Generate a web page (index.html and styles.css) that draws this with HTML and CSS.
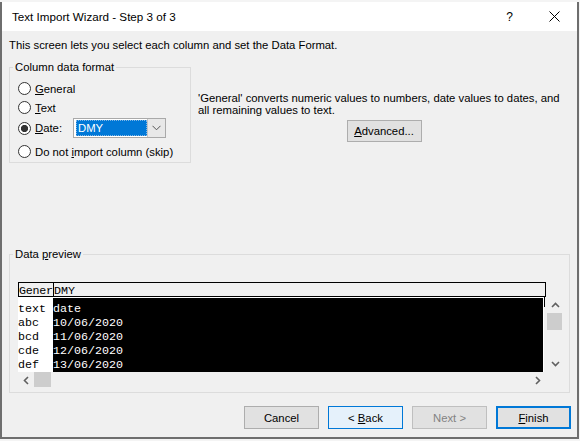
FILE: index.html
```html
<!DOCTYPE html>
<html>
<head>
<meta charset="utf-8">
<title>Text Import Wizard</title>
<link rel="stylesheet" href="styles.css">
</head>
<body>
<div class="window">
  <div class="titlebar">
    <span class="title">Text Import Wizard - Step 3 of 3</span>
    <span class="tb-btn help">?</span>
    <span class="tb-btn close"><svg width="11" height="11" viewBox="0 0 11 11"><path d="M0.5 0.5L10.5 10.5M10.5 0.5L0.5 10.5" stroke="#000" stroke-width="1" fill="none"/></svg></span>
  </div>
  <div class="content">
    <p class="intro">This screen lets you select each column and set the Data Format.</p>
    <div class="top">
      <fieldset class="group format">
        <legend>Column data format</legend>
        <div class="opt opt-g"><span class="radio"></span><span><u>G</u>eneral</span></div>
        <div class="opt opt-t"><span class="radio"></span><span><u>T</u>ext</span></div>
        <div class="opt opt-d"><span class="radio checked"></span><span class="date-lbl"><u>D</u>ate:</span>
          <div class="combo"><span class="combo-val">DMY</span><span class="combo-dd"><svg width="9" height="6" viewBox="0 0 9 6"><path d="M0.5 0.8L4.5 4.8L8.5 0.8" stroke="#555" stroke-width="1" fill="none"/></svg></span></div>
        </div>
        <div class="opt opt-n"><span class="radio"></span><span>Do not <u>i</u>mport column (skip)</span></div>
      </fieldset>
      <div class="info">
        <p class="info-text">'General' converts numeric values to numbers, date values to dates, and<br>all remaining values to text.</p>
        <button class="btn adv"><u>A</u>dvanced...</button>
      </div>
    </div>
    <fieldset class="group preview">
      <legend>Data <u>p</u>review</legend>
      <div class="pv">
        <div class="pv-head"><span class="hc hc-a">Gener</span><span class="hc hc-b">DMY</span></div>
        <div class="pv-body">
          <div class="col-a"><div>text</div><div>abc</div><div>bcd</div><div>cde</div><div>def</div></div>
          <div class="col-b"><div>date</div><div>10/06/2020</div><div>11/06/2020</div><div>12/06/2020</div><div>13/06/2020</div></div>
          <div class="col-edge"></div>
        </div>
        <div class="vscroll">
          <span class="arr"><svg width="9" height="6" viewBox="0 0 9 6"><path d="M1 5L4.5 1.5L8 5" stroke="#606060" stroke-width="1.6" fill="none"/></svg></span>
          <span class="vthumb"></span>
          <span class="vspace"></span>
          <span class="arr"><svg width="9" height="6" viewBox="0 0 9 6"><path d="M1 1L4.5 4.5L8 1" stroke="#606060" stroke-width="1.6" fill="none"/></svg></span>
        </div>
        <div class="hscroll">
          <span class="harr"><svg width="6" height="9" viewBox="0 0 6 9"><path d="M5 1L1.5 4.5L5 8" stroke="#606060" stroke-width="1.6" fill="none"/></svg></span>
          <span class="hthumb"></span>
          <span class="hspace"></span>
          <span class="harr"><svg width="6" height="9" viewBox="0 0 6 9"><path d="M1 1L4.5 4.5L1 8" stroke="#606060" stroke-width="1.6" fill="none"/></svg></span>
        </div>
      </div>
    </fieldset>
    <div class="btns">
      <button class="btn">Cancel</button>
      <button class="btn back">&lt; <u>B</u>ack</button>
      <button class="btn next">Next &gt;</button>
      <button class="btn finish"><u>F</u>inish</button>
    </div>
  </div>
</div>
</body>
</html>
```
FILE: styles.css
```css
html, body {
  margin: 0;
  padding: 0;
}
body {
  background: #f4f4f4;
  font-family: "Liberation Sans", Arial, sans-serif;
  font-size: 11.3px;
  color: #000;
}
u {
  text-decoration: underline;
  text-underline-offset: 1px;
}
.window {
  box-sizing: border-box;
  width: 579px;
  height: 437px;
  margin-top: 2px;
  border: 2px solid #6e6e6e;
  border-top: 0;
  background: #f0f0f0;
  display: flex;
  flex-direction: column;
}
.titlebar {
  height: 29px;
  flex: none;
  background: #fff;
  display: flex;
  align-items: center;
  padding-left: 10px;
}
.title {
  flex: 1;
  font-size: 11.65px;
}
.tb-btn {
  width: 46px;
  height: 29px;
  display: flex;
  align-items: center;
  justify-content: center;
}
.help {
  font-size: 12px;
  padding-left: 3px;
  box-sizing: border-box;
}
.content {
  flex: 1;
  padding: 7px 7px 0 7px;
  display: flex;
  flex-direction: column;
}
.intro {
  margin: 0;
  line-height: 15px;
  height: 15px;
}
.top {
  display: flex;
  margin-top: 7px;
}
.group {
  margin: 0;
  box-sizing: border-box;
  border: 1px solid #dcdcdc;
  min-width: 0;
}
.group legend {
  margin-left: 3px;
  padding: 0 2px;
  line-height: 15px;
}
.format {
  width: 182px;
  padding: 6px 0 3px 0;
}
.opt {
  display: flex;
  align-items: center;
  height: 15px;
  white-space: nowrap;
}
.opt-t { margin-top: 4px; }
.opt-d { margin-top: 3px; height: 20px; }
.opt-n { margin-top: 6px; }
.radio {
  flex: none;
  box-sizing: border-box;
  width: 13px;
  height: 13px;
  margin: 0 4px 0 8px;
  border: 1px solid #333;
  border-radius: 50%;
  background: #fff;
}
.radio.checked {
  background: radial-gradient(circle, #333 0 3.3px, #fff 3.9px);
}
.date-lbl {
  width: 38px;
}
.combo {
  box-sizing: border-box;
  width: 93px;
  height: 20px;
  display: flex;
  border: 1px solid #a9a9a9;
  background: #fff;
  padding: 1px 0 1px 2px;
}
.combo-val {
  flex: 1;
  background: #0078d7;
  color: #fff;
  line-height: 16px;
  padding-left: 2px;
  outline: 1px dotted #7fb6e6;
  outline-offset: -1px;
}
.combo-dd {
  width: 17px;
  margin: -1px 0;
  background: #e8e8e8;
  border-left: 1px solid #c4c4c4;
  display: flex;
  align-items: center;
  justify-content: center;
}
.info {
  flex: 1;
  margin-left: 7px;
  padding-top: 32px;
  display: flex;
  flex-direction: column;
  align-items: center;
}
.info-text {
  margin: 0;
  align-self: flex-start;
  line-height: 12px;
  white-space: nowrap;
}
.btn {
  box-sizing: border-box;
  width: 75px;
  height: 23px;
  padding: 0;
  margin: 0;
  border: 1px solid #adadad;
  background: #e1e1e1;
  font-family: inherit;
  font-size: 11.3px;
  color: #000;
}
.adv {
  margin-top: 4px;
  height: 22px;
}
.preview {
  width: 561px;
  margin-top: 84px;
  padding: 20px 0 3px 0;
}
.pv {
  display: grid;
  grid-template-columns: 528px 18px;
  grid-template-rows: 15px 75px 17px;
  margin-left: 8px;
  font-family: "Liberation Mono", "Courier New", monospace;
  font-size: 11.67px;
}
.pv-head {
  grid-column: 1;
  grid-row: 1;
  box-sizing: border-box;
  border: 1px solid #000;
  display: flex;
  background: #f0f0f0;
}
.hc {
  line-height: 10px;
  padding-top: 3px;
  white-space: nowrap;
}
.hc-a {
  width: 34px;
  flex: none;
  letter-spacing: -0.25px;
  border-right: 1px solid #000;
}
.pv-body {
  grid-column: 1;
  grid-row: 2;
  display: flex;
}
.col-a, .col-b {
  padding-top: 5px;
  line-height: 14px;
  white-space: nowrap;
}
.col-a {
  width: 35px;
  background: #fff;
  color: #000;
}
.col-b {
  box-sizing: border-box;
  width: 491px;
  background: #000;
  color: #fff;
  border-top: 1px solid #fff;
  border-right: 1px solid #fff;
  padding-top: 4px;
}
.col-edge {
  width: 1px;
  background: #000;
  height: 10px;
}
.vscroll {
  grid-column: 2;
  grid-row: 2;
  display: flex;
  flex-direction: column;
  align-items: center;
}
.arr {
  height: 16px;
  display: flex;
  align-items: center;
  justify-content: center;
}
.vthumb {
  width: 15px;
  height: 17px;
  background: #cdcdcd;
  margin-right: 2px;
}
.vspace { flex: 1; }
.hscroll {
  grid-column: 1;
  grid-row: 3;
  display: flex;
  align-items: center;
}
.harr {
  width: 16px;
  height: 15px;
  display: flex;
  align-items: center;
  justify-content: center;
}
.hthumb {
  width: 17px;
  height: 15px;
  background: #cdcdcd;
  align-self: flex-start;
}
.hspace { flex: 1; }
.btns {
  display: flex;
  justify-content: flex-end;
  gap: 9px;
  margin-top: 13px;
  margin-right: -1px;
}
.back {
  background: #e5f1fb;
  border-color: #0078d7;
}
.next {
  color: #838383;
  border-color: #bfbfbf;
  background: #e1e1e1;
}
.finish {
  border: 2px solid #0078d7;
}
```
